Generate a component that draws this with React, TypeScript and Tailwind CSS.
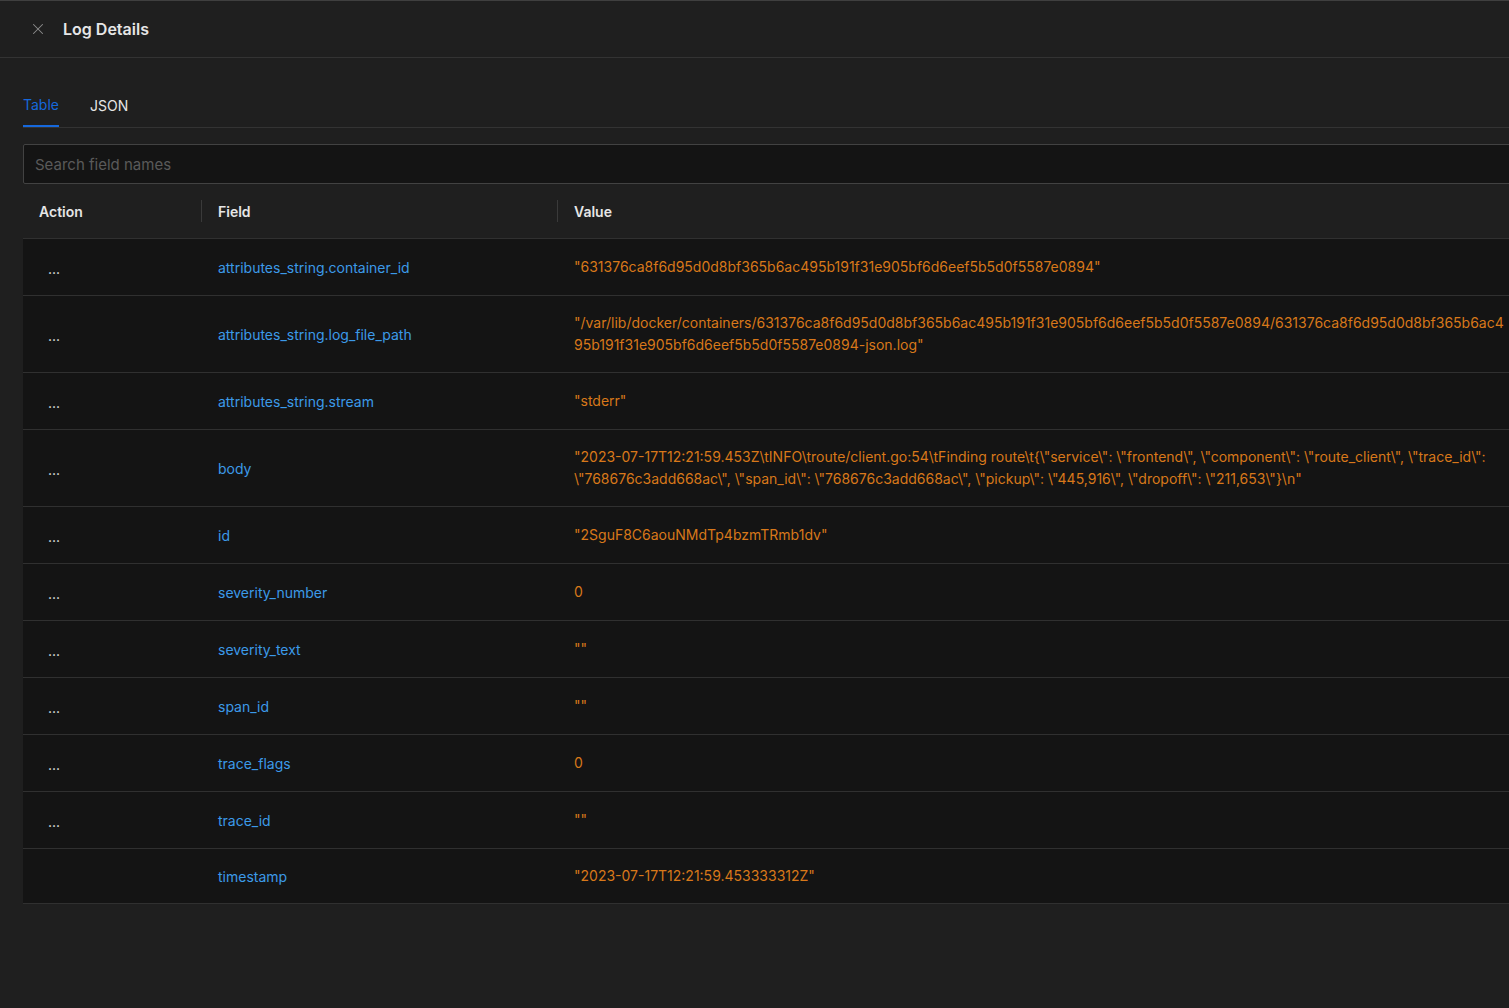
import { X } from "lucide-react";

type Row = { field: string; value: string; action?: boolean };

const rows: Row[] = [
  {
    field: "attributes_string.container_id",
    value: '"631376ca8f6d95d0d8bf365b6ac495b191f31e905bf6d6eef5b5d0f5587e0894"',
    action: true,
  },
  {
    field: "attributes_string.log_file_path",
    value:
      '"/var/lib/docker/containers/631376ca8f6d95d0d8bf365b6ac495b191f31e905bf6d6eef5b5d0f5587e0894/631376ca8f6d95d0d8bf365b6ac495b191f31e905bf6d6eef5b5d0f5587e0894-json.log"',
    action: true,
  },
  { field: "attributes_string.stream", value: '"stderr"', action: true },
  {
    field: "body",
    value:
      '"2023-07-17T12:21:59.453Z\\tINFO\\troute/client.go:54\\tFinding route\\t{\\"service\\": \\"frontend\\", \\"component\\": \\"route_client\\", \\"trace_id\\": \\"768676c3add668ac\\", \\"span_id\\": \\"768676c3add668ac\\", \\"pickup\\": \\"445,916\\", \\"dropoff\\": \\"211,653\\"}\\n"',
    action: true,
  },
  { field: "id", value: '"2SguF8C6aouNMdTp4bzmTRmb1dv"', action: true },
  { field: "severity_number", value: "0", action: true },
  { field: "severity_text", value: '""', action: true },
  { field: "span_id", value: '""', action: true },
  { field: "trace_flags", value: "0", action: true },
  { field: "trace_id", value: '""', action: true },
  { field: "timestamp", value: '"2023-07-17T12:21:59.453333312Z"' },
];

export default function App() {
  return (
    <div
      className="h-screen w-full overflow-hidden bg-[#1f1f1f] text-[14px] text-[#e6e6e6]"
      style={{ fontFamily: "Inter, 'Noto Sans', sans-serif" }}
    >
      <div className="flex h-[58px] items-center gap-[16px] border-t border-b border-t-[#3f3f3f] border-b-[#333333] pl-[29px]">
        <X className="h-[18px] w-[18px] text-[#8c8c8c]" strokeWidth={1.4} />
        <h1 className="text-[16px] font-semibold text-[#e6e6e6]">Log Details</h1>
      </div>

      <div className="w-[1524px] pl-[23px] pt-[31px]">
        <div className="flex gap-[31px] border-b border-[#333333]">
          <button className="border-b-2 border-[#1668dc] pb-[10px] pt-[5px] text-[14px] text-[#1668dc]">
            Table
          </button>
          <button className="pb-[10px] pt-[5px] text-[14px] text-[#e6e6e6]">JSON</button>
        </div>

        <input
          placeholder="Search field names"
          className="mt-[16px] h-[40px] w-full rounded-[2px] border border-[#424242] bg-[#141414] px-[11px] text-[15px] text-[#e6e6e6] outline-none placeholder:text-[#5a5a5a]"
        />

        <div className="w-full">
          <div className="flex h-[55px] items-center border-b border-[#303030] font-semibold">
            <div className="relative w-[179px] shrink-0 px-[16px]">
              Action
              <span className="absolute right-0 top-1/2 h-[22px] w-px -translate-y-1/2 bg-[#3a3a3a]" />
            </div>
            <div className="relative w-[356px] shrink-0 px-[16px]">
              Field
              <span className="absolute right-0 top-1/2 h-[22px] w-px -translate-y-1/2 bg-[#3a3a3a]" />
            </div>
            <div className="flex-1 px-[16px]">Value</div>
          </div>

          {rows.map((r) => (
            <div
              key={r.field}
              className="flex items-center border-b border-[#303030] bg-[#141414] py-[16px]"
            >
              <div className="w-[179px] shrink-0 px-[25px] text-[#e6e6e6]">
                {r.action ? (
                  <div className="flex h-[24px] items-center pt-[3px]">...</div>
                ) : null}
              </div>
              <div className="w-[356px] shrink-0 px-[16px] text-[#3c9ae8]">{r.field}</div>
              <div className="min-w-0 flex-1 break-words px-[16px] leading-[22px] text-[#d8781a]">
                {r.value}
              </div>
            </div>
          ))}
        </div>
      </div>
    </div>
  );
}
